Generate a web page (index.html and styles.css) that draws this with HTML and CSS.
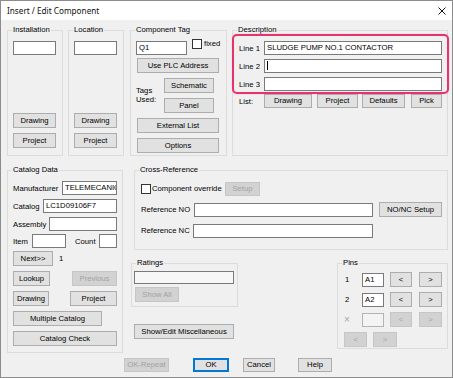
FILE: index.html
```html
<!DOCTYPE html>
<html lang="en">

<head>
    <meta charset="UTF-8" />
    <title>Insert / Edit Component</title>
    <link rel="stylesheet" href="styles.css">
</head>

<body>
    <div class="window">
        <div class="titlebar">
            <span class="title">Insert / Edit Component</span>
            <svg class="close" width="10" height="10" viewBox="0 0 10 10">
                <path d="M1.5 1.5L8.5 8.5M8.5 1.5L1.5 8.5" stroke="#111" stroke-width="1" />
            </svg>
        </div>

        <div class="dialog">
            <!-- top row: installation / location / tag / description -->
            <div class="top-row">
                <div class="group small-box">
                    <div class="group-title">Installation</div>
                    <div class="group-body small-body">
                        <div class="field small-field"></div>
                        <button class="btn small-btn push-down">Drawing</button>
                        <button class="btn small-btn gap5">Project</button>
                    </div>
                </div>

                <div class="group small-box">
                    <div class="group-title">Location</div>
                    <div class="group-body small-body">
                        <div class="field small-field"></div>
                        <button class="btn small-btn push-down">Drawing</button>
                        <button class="btn small-btn gap5">Project</button>
                    </div>
                </div>

                <div class="group tag-box">
                    <div class="group-title">Component Tag</div>
                    <div class="group-body tag-body">
                        <div class="tag-row">
                            <div class="field tag-field">Q1</div>
                            <span class="check tag-check"></span>
                            <span class="fixed-label">fixed</span>
                        </div>
                        <button class="btn wide-btn" id="plc">Use PLC Address</button>
                        <div class="tags-used">
                            <div class="tags-text">Tags<br>Used:</div>
                            <div class="tags-buttons">
                                <button class="btn tags-btn">Schematic</button>
                                <button class="btn tags-btn gap5">Panel</button>
                            </div>
                        </div>
                        <button class="btn wide-btn gap5">External List</button>
                        <button class="btn wide-btn gap5">Options</button>
                    </div>
                </div>

                <div class="group desc-box">
                    <div class="group-title">Description</div>
                    <div class="group-body desc-body">
                        <div class="desc-row">
                            <span class="desc-label">Line 1</span>
                            <div class="field desc-field">SLUDGE PUMP NO.1 CONTACTOR</div>
                        </div>
                        <div class="desc-row gap4">
                            <span class="desc-label">Line 2</span>
                            <div class="field desc-field"><span class="caret"></span></div>
                        </div>
                        <div class="desc-row gap4">
                            <span class="desc-label">Line 3</span>
                            <div class="field desc-field"></div>
                        </div>
                        <div class="list-row">
                            <span class="desc-label">List:</span>
                            <button class="btn list-btn" id="listDrawing">Drawing</button>
                            <button class="btn list-btn" id="listProject">Project</button>
                            <button class="btn list-btn" id="listDefaults">Defaults</button>
                            <button class="btn list-btn" id="listPick">Pick</button>
                        </div>
                    </div>
                    <div class="highlight"></div>
                </div>
            </div>

            <!-- middle: catalog data + cross reference, ratings, pins -->
            <div class="mid-row">
                <div class="group catalog-box">
                    <div class="group-title">Catalog Data</div>
                    <div class="group-body catalog-body">
                        <div class="cat-row">
                            <span>Manufacturer</span>
                            <div class="field" id="manufacturer">TELEMECANIQUE</div>
                        </div>
                        <div class="cat-row gap4">
                            <span>Catalog</span>
                            <div class="field" id="catalog">LC1D09106F7</div>
                        </div>
                        <div class="cat-row gap4">
                            <span>Assembly</span>
                            <div class="field" id="assembly"></div>
                        </div>
                        <div class="cat-row gap3">
                            <span class="item-label">Item</span>
                            <div class="field" id="item"></div>
                            <span class="count-label">Count</span>
                            <div class="field" id="count"></div>
                        </div>
                        <div class="btn-row gap3">
                            <button class="btn" id="next">Next&gt;&gt;</button>
                            <span class="next-num">1</span>
                        </div>
                        <div class="btn-row split gap5">
                            <button class="btn" id="lookup">Lookup</button>
                            <button class="btn off" id="previous">Previous</button>
                        </div>
                        <div class="btn-row split gap5">
                            <button class="btn" id="catDrawing">Drawing</button>
                            <button class="btn" id="catProject">Project</button>
                        </div>
                        <button class="btn gap5" id="multiple">Multiple Catalog</button>
                        <button class="btn gap5" id="catCheck">Catalog Check</button>
                    </div>
                </div>

                <div class="right-col">
                    <div class="group xref-box">
                        <div class="group-title">Cross-Reference</div>
                        <div class="group-body xref-body">
                            <div class="xref-row">
                                <span class="check"></span>
                                <span class="override-label">Component override</span>
                                <button class="btn off" id="setup">Setup</button>
                            </div>
                            <div class="xref-row gap6">
                                <span class="ref-label">Reference NO</span>
                                <div class="field" id="refNo"></div>
                                <button class="btn" id="noncSetup">NO/NC Setup</button>
                            </div>
                            <div class="xref-row gap6">
                                <span class="ref-label nc">Reference NC</span>
                                <div class="field" id="refNc"></div>
                            </div>
                        </div>
                    </div>

                    <div class="sub-row">
                        <div class="ratings-col">
                            <div class="group ratings-box">
                                <div class="group-title">Ratings</div>
                                <div class="group-body ratings-body">
                                    <div class="field" id="ratings"></div>
                                    <button class="btn off" id="showAll">Show All</button>
                                </div>
                            </div>
                            <button class="btn" id="misc">Show/Edit Miscellaneous</button>
                        </div>

                        <div class="group pins-box">
                            <div class="group-title">Pins</div>
                            <div class="group-body pins-body">
                                <div class="pin-row">
                                    <span class="pin-num">1</span>
                                    <div class="field pin-field">A1</div>
                                    <button class="btn pin-prev">&lt;</button>
                                    <button class="btn pin-next">&gt;</button>
                                </div>
                                <div class="pin-row gap5">
                                    <span class="pin-num">2</span>
                                    <div class="field pin-field">A2</div>
                                    <button class="btn pin-prev">&lt;</button>
                                    <button class="btn pin-next">&gt;</button>
                                </div>
                                <div class="pin-row gap5">
                                    <span class="pin-num x">&#215;</span>
                                    <div class="field pin-field dim"></div>
                                    <button class="btn off pin-prev">&lt;</button>
                                    <button class="btn off pin-next">&gt;</button>
                                </div>
                                <div class="pin-row gap5">
                                    <button class="btn off" id="pagePrev">&lt;</button>
                                    <button class="btn off" id="pageNext">&gt;</button>
                                </div>
                            </div>
                        </div>
                    </div>
                </div>
            </div>

            <!-- dialog buttons -->
            <div class="bottom-row">
                <button class="btn off" id="okRepeat">OK-Repeat</button>
                <button class="btn" id="ok">OK</button>
                <button class="btn" id="cancel">Cancel</button>
                <button class="btn" id="help">Help</button>
            </div>
        </div>
    </div>
</body>

</html>
```

FILE: styles.css
```css
* {
    box-sizing: border-box;
}

body {
    margin: 0;
    font-family: "Liberation Sans", Arial, sans-serif;
    font-size: 7.7px;
    color: #000;
}

.window {
    width: 453px;
    height: 378px;
    border: 1px solid #8c8c8c;
    background: #f0f0f0;
    overflow: hidden;
}

.titlebar {
    height: 19px;
    background: #fff;
    display: flex;
    align-items: center;
    justify-content: space-between;
    padding: 0 5px 0 6px;
}

.title {
    font-family: "Noto Sans", "Liberation Sans", sans-serif;
    font-size: 8.2px;
    color: #111;
}

.dialog {
    padding: 0 4px 0 6px;
}

/* group boxes */
.group {
    border: 1px solid #dcdcdc;
    display: flex;
    flex-direction: column;
    position: relative;
}

.group-title {
    align-self: flex-start;
    margin: -6px 0 0 4px;
    padding: 0 1px;
    line-height: 10px;
    background: #f0f0f0;
}

.group-body {
    flex: 1;
    display: flex;
    flex-direction: column;
    align-items: flex-start;
}

/* controls */
.field {
    height: 14px;
    border: 1px solid #7a7a7a;
    background: #fff;
    padding: 0 2px;
    line-height: 12px;
    white-space: nowrap;
    overflow: hidden;
    flex-shrink: 0;
}

.btn {
    height: 15px;
    border: 1px solid #adadad;
    background: #e1e1e1;
    font: inherit;
    color: inherit;
    padding: 0;
    line-height: 13px;
    text-align: center;
    white-space: nowrap;
    flex-shrink: 0;
}

.btn.off {
    background: #d2d2d2;
    border-color: #c6c6c6;
    color: #a2a2a2;
}

.check {
    width: 10px;
    height: 10px;
    border: 1px solid #333;
    background: #fff;
    flex-shrink: 0;
}

.gap3 { margin-top: 3px; }
.gap4 { margin-top: 4px; }
.gap5 { margin-top: 5px; }
.gap6 { margin-top: 6px; }

/* top row */
.top-row {
    display: flex;
    margin-top: 10px;
}

.small-box {
    width: 56px;
    height: 126px;
    margin-right: 5px;
}

.small-body {
    padding: 6px 0 7px 5px;
}

.small-field {
    width: 43px;
}

.small-btn {
    width: 43px;
}

.push-down {
    margin-top: auto;
}

.tag-box {
    width: 97px;
    height: 126px;
    margin-left: 1px;
    margin-right: 5px;
}

.tag-body {
    padding: 6px 0 0 5px;
}

.tag-row {
    display: flex;
    align-items: flex-start;
}

.tag-field {
    width: 51px;
}

.tag-check {
    margin: -2px 0 0 5px;
}

.fixed-label {
    margin: -2px 0 0 2px;
    line-height: 10px;
}

.wide-btn {
    width: 82px;
    margin-left: 1px;
}

#plc {
    margin-top: 3px;
}

.tags-used {
    display: flex;
    margin-top: 5px;
}

.tags-text {
    width: 28px;
    margin-top: 8px;
    line-height: 9px;
}

.tags-buttons {
    display: flex;
    flex-direction: column;
}

.tags-btn {
    width: 50px;
}

.desc-box {
    width: 216px;
    height: 126px;
}

.desc-body {
    padding: 6px 0 0 6px;
}

.desc-row {
    display: flex;
    align-items: center;
}

.desc-label {
    width: 25px;
    flex-shrink: 0;
}

.desc-field {
    width: 178px;
}

.caret {
    display: inline-block;
    width: 1px;
    height: 9px;
    background: #000;
    vertical-align: middle;
}

.list-row {
    display: flex;
    align-items: center;
    margin-top: 3px;
}

.list-btn {
    height: 14px;
    line-height: 12px;
}

#listDrawing { width: 48px; }
#listProject { width: 41px; margin-left: 5px; }
#listDefaults { width: 43px; margin-left: 4px; }
#listPick { width: 31px; margin-left: 6px; }

.highlight {
    position: absolute;
    left: -1px;
    top: 3px;
    width: 217px;
    height: 60px;
    border: 2px solid #e6336b;
    border-radius: 5px;
    box-shadow: 0 0 1px #f07aa0;
}

/* middle row */
.mid-row {
    display: flex;
    margin-top: 14px;
}

.catalog-box {
    width: 116px;
    height: 183px;
}

.catalog-body {
    padding: 6px 5px 0 5px;
    align-items: stretch;
}

.cat-row {
    display: flex;
    align-items: center;
    justify-content: space-between;
}

#manufacturer { width: 55px; }
#catalog { width: 74px; }
#assembly { width: 68px; }

.item-label {
    width: 19px;
}

#item {
    width: 34px;
}

.count-label {
    width: 24px;
    margin-left: 9px;
}

#count {
    width: 18px;
}

.btn-row {
    display: flex;
    align-items: center;
}

.btn-row.split {
    justify-content: space-between;
}

#next { width: 40px; }

.next-num {
    margin-left: 6px;
}

#lookup { width: 37px; }
#previous { width: 45px; }
#catDrawing { width: 36px; }
#catProject { width: 47px; }
#multiple { width: 89px; align-self: flex-start; }
#catCheck { width: 104px; }

.right-col {
    margin-left: 11px;
    width: 314px;
}

.xref-box {
    width: 314px;
    height: 80px;
}

.xref-body {
    padding: 6px 0 0 6px;
}

.xref-row {
    display: flex;
    align-items: center;
    height: 15px;
}

.override-label {
    width: 73px;
    margin-left: 1px;
}

#setup {
    width: 35px;
    height: 14px;
    line-height: 12px;
}

.ref-label {
    width: 53px;
}

.ref-label.nc {
    width: 52px;
}

#refNo { width: 179px; }
#refNc { width: 180px; }

#noncSetup {
    width: 63px;
    margin-left: 6px;
}

.sub-row {
    display: flex;
    margin: 13px 0 0 -3px;
}

.ratings-col {
    width: 107px;
    display: flex;
    flex-direction: column;
    align-items: flex-start;
}

.ratings-box {
    width: 107px;
    height: 44px;
}

.ratings-body {
    padding: 3px 0 0 2px;
}

#ratings {
    width: 100px;
    height: 13px;
    background: #f7f7f7;
}

#showAll {
    width: 44px;
    margin: 3px 0 0 1px;
}

#misc {
    width: 100px;
    margin: 17px 0 0 3px;
}

.pins-box {
    width: 111px;
    height: 86px;
    margin-left: 99px;
}

.pins-body {
    padding: 4px 0 0 7px;
}

.pin-row {
    display: flex;
    align-items: center;
}

.pin-num {
    width: 17px;
}

.pin-num.x {
    color: #a8a8a8;
    font-size: 10px;
    line-height: 10px;
    margin-left: -1px;
    width: 18px;
}

.pin-field {
    width: 22px;
}

.pin-field.dim {
    border-color: #b4b4b4;
    background: #f4f4f4;
}

.pin-prev {
    width: 22px;
    margin-left: 6px;
}

.pin-next {
    width: 23px;
    margin-left: 7px;
}

#pagePrev {
    width: 23px;
    margin-left: -1px;
}

#pageNext {
    width: 24px;
    margin-left: 6px;
}

/* bottom buttons */
.bottom-row {
    display: flex;
    margin-top: 5px;
}

.bottom-row .btn {
    height: 14px;
    line-height: 12px;
}

#okRepeat { width: 45px; margin-left: 117px; }
#ok {
    width: 36px;
    margin-left: 24px;
    border-color: #0078d7;
    box-shadow: inset 0 0 0 1px #0078d7;
}
#cancel { width: 32px; margin-left: 14px; }
#help { width: 34px; margin-left: 23px; }
```
